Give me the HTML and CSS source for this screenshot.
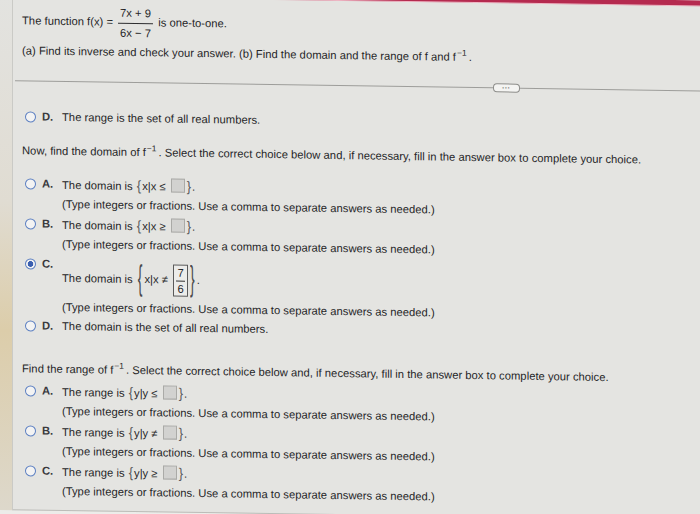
FILE: index.html
```html
<!DOCTYPE html>
<html>
<head>
<meta charset="utf-8">
<link rel="stylesheet" href="styles.css">
</head>
<body>
<div class="frame">
  <div class="topbar"></div>
  <div class="body">
    <div class="gutter"></div>
    <main class="page">
      <p class="q1">The function f(x) = <span class="frac"><span class="num">7x + 9</span><span class="den">6x − 7</span></span> is one-to-one.</p>
      <p class="q2">(a) Find its inverse and check your answer. (b) Find the domain and the range of f and f<sup>−1</sup>.</p>
      <div class="divider"><span class="rule lead"></span><span class="more">•••</span><span class="rule"></span></div>

      <div class="opt first"><span class="radio"></span><b class="lbl">D.</b><div class="txt"><div class="ln">The range is the set of all real numbers.</div></div></div>

      <p class="prompt">Now, find the domain of f<sup>−1</sup>. Select the correct choice below and, if necessary, fill in the answer box to complete your choice.</p>

      <div class="opt"><span class="radio"></span><b class="lbl">A.</b><div class="txt"><div class="ln">The domain is <span class="set"><span class="br">{</span>x|x ≤ <span class="box"></span><span class="br">}</span></span>.</div><div class="ln">(Type integers or fractions. Use a comma to separate answers as needed.)</div></div></div>
      <div class="opt"><span class="radio"></span><b class="lbl">B.</b><div class="txt"><div class="ln">The domain is <span class="set"><span class="br">{</span>x|x ≥ <span class="box"></span><span class="br">}</span></span>.</div><div class="ln">(Type integers or fractions. Use a comma to separate answers as needed.)</div></div></div>
      <div class="opt"><span class="radio on"></span><b class="lbl">C.</b><div class="txt"><div class="ln tall">The domain is <span class="set"><span class="bbr">{</span>x|x ≠ <span class="fbox"><span class="fn">7</span><span class="fd">6</span></span><span class="bbr">}</span></span>.</div><div class="ln">(Type integers or fractions. Use a comma to separate answers as needed.)</div></div></div>
      <div class="opt"><span class="radio"></span><b class="lbl">D.</b><div class="txt"><div class="ln">The domain is the set of all real numbers.</div></div></div>

      <p class="prompt second">Find the range of f<sup>−1</sup>. Select the correct choice below and, if necessary, fill in the answer box to complete your choice.</p>

      <div class="opt"><span class="radio"></span><b class="lbl">A.</b><div class="txt"><div class="ln">The range is <span class="set"><span class="br">{</span>y|y ≤ <span class="box"></span><span class="br">}</span></span>.</div><div class="ln">(Type integers or fractions. Use a comma to separate answers as needed.)</div></div></div>
      <div class="opt"><span class="radio"></span><b class="lbl">B.</b><div class="txt"><div class="ln">The range is <span class="set"><span class="br">{</span>y|y ≠ <span class="box"></span><span class="br">}</span></span>.</div><div class="ln">(Type integers or fractions. Use a comma to separate answers as needed.)</div></div></div>
      <div class="opt"><span class="radio"></span><b class="lbl">C.</b><div class="txt"><div class="ln">The range is <span class="set"><span class="br">{</span>y|y ≥ <span class="box"></span><span class="br">}</span></span>.</div><div class="ln">(Type integers or fractions. Use a comma to separate answers as needed.)</div></div></div>
    </main>
  </div>
</div>
</body>
</html>
```

FILE: styles.css
```css
* { box-sizing: border-box; }
html, body { margin: 0; padding: 0; }
body {
  width: 700px;
  height: 514px;
  overflow: hidden;
  background: #ecece9;
  font-family: "Liberation Sans", Arial, sans-serif;
  font-size: 11.25px;
  color: #262628;
}
.frame {
  width: 720px;
  margin-top: -10px;
  transform: skewY(0.85deg);
  transform-origin: 0 0;
}
.topbar {
  height: 6px;
  background: #b52a4f;
  border-bottom: 1px solid #efb9c6;
}
.body { display: flex; }
.gutter {
  width: 12px;
  background: linear-gradient(#e3e3e0 0%, #e0dcd2 40%, #dccdaa 65%, #ddd8cb 100%);
}
.page {
  flex: 1;
  height: 514px;
  background: #e4e4e1;
  border-left: 1px solid #cacac6;
  border-bottom: 1px solid #bcbcb8;
  padding: 7px 0 0 9px;
}
p { margin: 0; }
sup { font-size: 8.5px; line-height: 0; vertical-align: 5px; margin: 0 2px 0 1px; }

.q1 { height: 34px; line-height: 34px; }
.frac {
  display: inline-flex;
  flex-direction: column;
  align-items: center;
  vertical-align: middle;
  line-height: 13px;
  margin: 0 2px;
}
.num { padding: 0 2px 3px; border-bottom: 1px solid #2e2e30; }
.den { padding: 3px 2px 0; }
.q2 { margin-top: 5px; line-height: 16px; }

.divider {
  display: flex;
  align-items: center;
  height: 10px;
  margin: 17px 0 0 -7px;
}
.rule { flex: 1; height: 1px; background: #9d9d9a; }
.rule.lead { flex: none; width: 478px; }
.more {
  width: 27px;
  height: 9px;
  border: 1px solid #8d8d8a;
  border-radius: 4px;
  background: #f4f4f2;
  font-size: 5px;
  line-height: 7px;
  text-align: center;
  color: #666;
  letter-spacing: 1px;
}

.opt {
  display: flex;
  align-items: flex-start;
  line-height: 19.5px;
  margin-left: 3px;
}
.opt.first { margin-top: 22px; }
.radio {
  flex: none;
  width: 11px;
  height: 11px;
  margin-top: 4px;
  border: 1.5px solid #5b7fc2;
  border-radius: 50%;
  background: #f3f3f3;
}
.radio.on {
  background: radial-gradient(circle, #3a5fb0 0 2.6px, #f3f3f3 3.1px);
}
.lbl { width: 20px; margin-left: 6px; font-weight: bold; color: #3a3a3e; }
.txt { flex: 1; }
.ln.tall {
  height: 43px;
  padding-top: 6px;
  display: flex;
  align-items: center;
  white-space: pre;
}

.prompt { margin-top: 15px; margin-bottom: 16px; line-height: 16px; }
.prompt.second { margin-top: 24px; margin-bottom: 5px; }

.set { white-space: nowrap; }
.br {
  display: inline-block;
  font-size: 13px;
  color: #5a5a5c;
  transform: scaleY(1.1);
  margin: 0 1px;
}
.box {
  display: inline-block;
  width: 14px;
  height: 14px;
  vertical-align: middle;
  background: #d2d2d0;
  border: 1px solid #aaaaa7;
  margin: -3px 1px 0 2px;
}
.bbr {
  display: inline-block;
  font-size: 14px;
  color: #4a4a4c;
  transform: scaleY(2.5);
  margin: 0 2px;
}
.fbox {
  display: inline-flex;
  flex-direction: column;
  align-items: center;
  width: 15px;
  height: 32px;
  border: 1px solid #5a5a5a;
  background: #ececea;
  line-height: 13px;
  margin-left: 2px;
  padding-top: 1px;
  vertical-align: middle;
}
.fn { border-bottom: 1px solid #333; padding: 0 1px 1px; }
.fd { padding-top: 1px; }
```
